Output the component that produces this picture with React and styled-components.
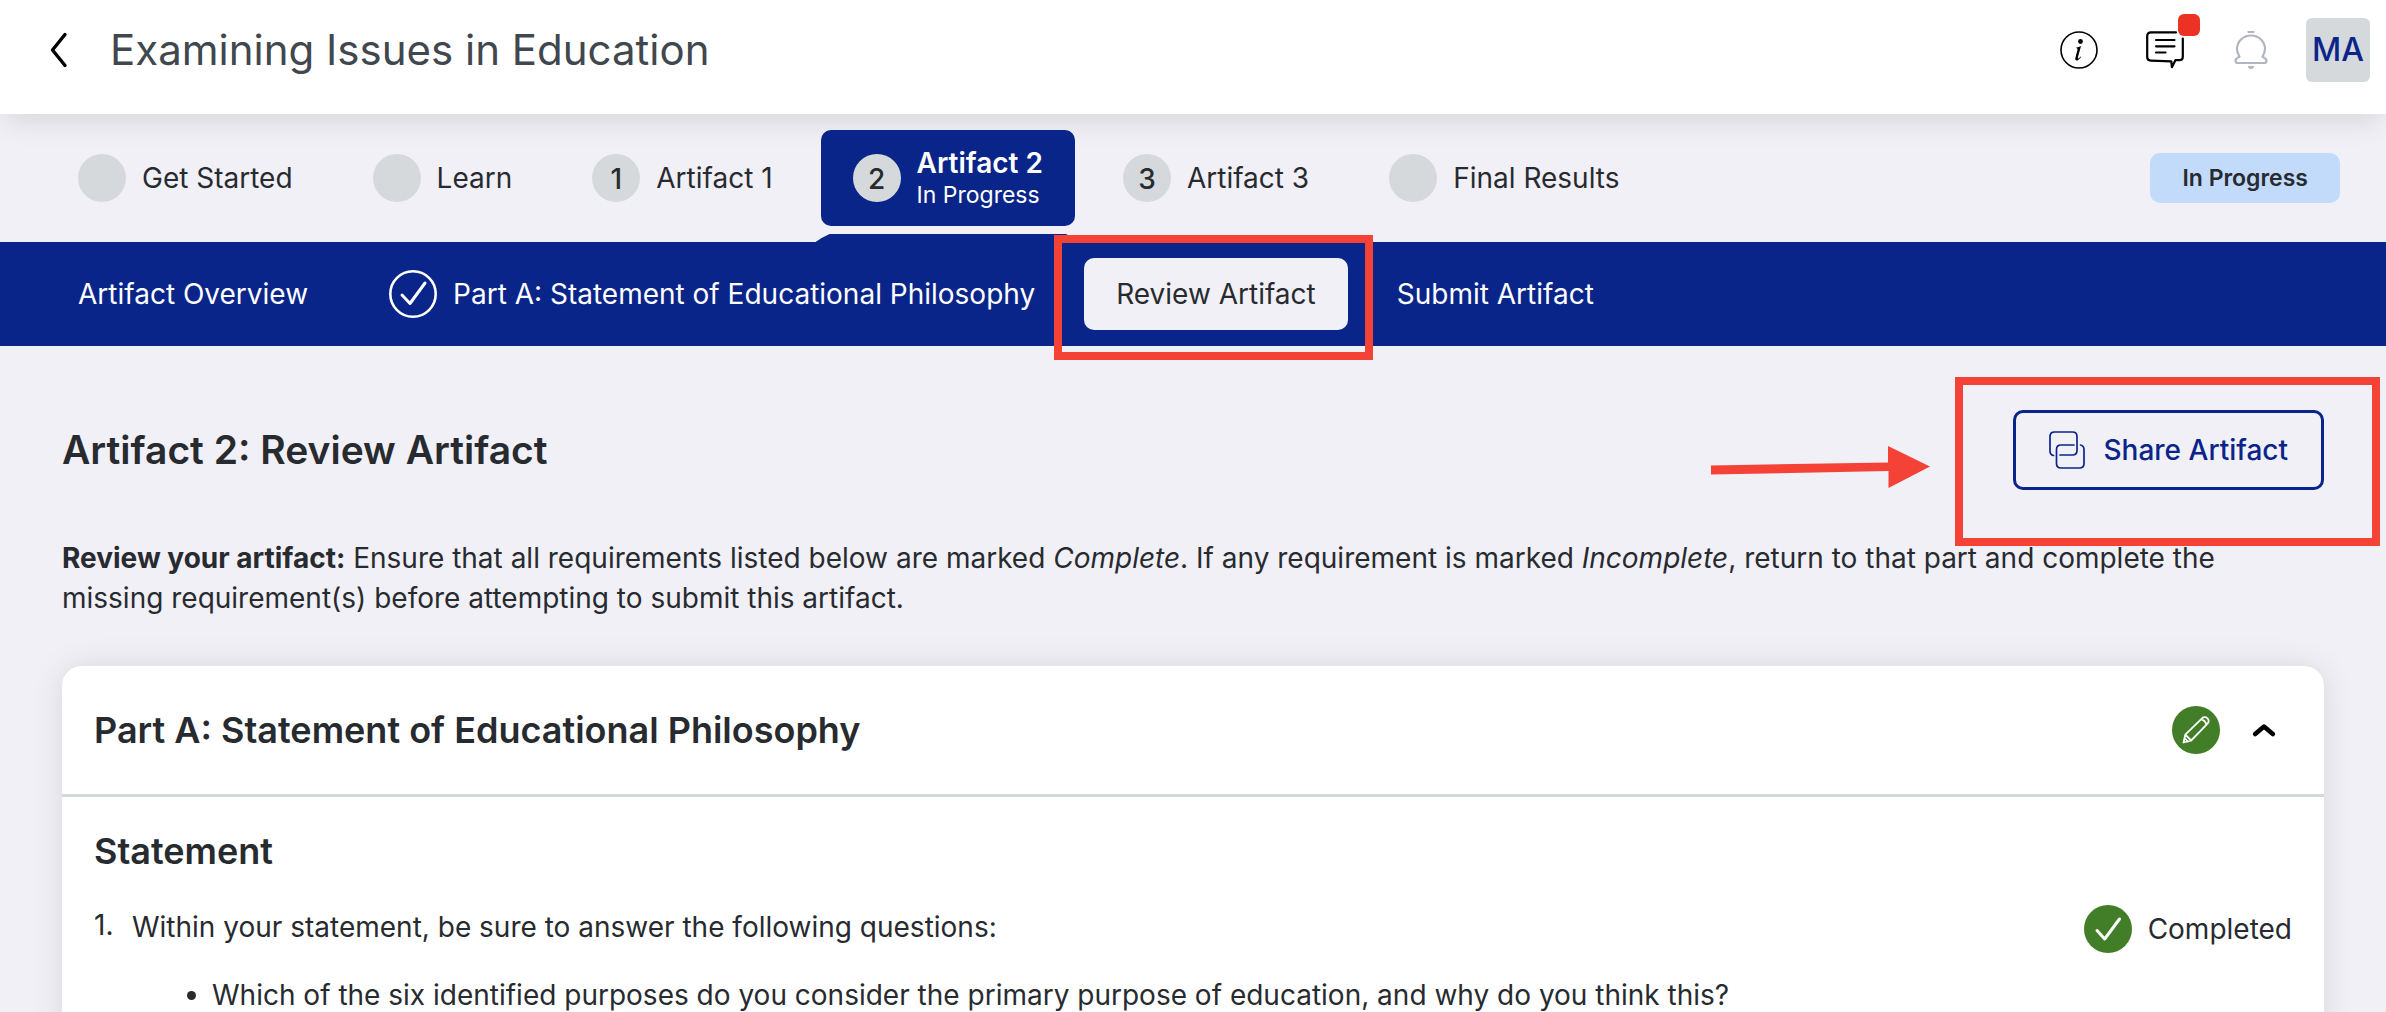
import React from 'react'
import styled, { createGlobalStyle, css } from 'styled-components'

const navy = '#0a2589'
const ink = '#272b30'
const grey = '#d5d9dc'
const page = '#f1f0f6'
const green = '#427d28'
const red = '#f44336'

const GlobalStyle = createGlobalStyle`
	* {
		box-sizing: border-box;
	}
	body {
		margin: 0;
		background: ${page};
		color: ${ink};
		font-family: Inter, 'Liberation Sans', sans-serif;
		font-size: 28px;
		line-height: 40px;
	}
	a {
		color: inherit;
		text-decoration: none;
	}
	h1, h2, h3, h4, p, ul, ol {
		margin: 0;
		padding: 0;
	}
	svg {
		display: block;
		fill: none;
		stroke: currentColor;
		stroke-linecap: round;
		stroke-linejoin: round;
	}
`
const Page = styled.div`
	height: 100vh;
	overflow: hidden;
`
const BaseButton = styled.button`
	padding: 0;
	border: 0;
	background: none;
	color: #000;
	font: inherit;
	cursor: pointer;
`
const Header = styled.header`
	position: relative;
	display: flex;
	align-items: flex-start;
	justify-content: space-between;
	height: 114px;
	padding: 18px 16px 0 48px;
	background: #fff;
	box-shadow: 0 12px 28px -6px rgba(0, 0, 0, 0.12);
`
const HeaderGroup = styled.div`
	display: flex;
	align-items: center;
	height: 64px;
	gap: ${({ $gap }) => $gap}px;
`
const CourseTitle = styled.h1`
	color: #41474e;
	font-size: 42px;
	font-weight: 400;
	line-height: 64px;
`
const IconButton = styled(BaseButton)`
	position: relative;
	color: ${({ $color }) => $color || '#000'};
`
const Badge = styled.span`
	position: absolute;
	top: -17px;
	right: -16px;
	width: 22px;
	height: 22px;
	border-radius: 6px;
	background: #ec3323;
`
const Avatar = styled(BaseButton)`
	width: 64px;
	height: 64px;
	border-radius: 6px;
	background: ${grey};
	color: ${navy};
	font-size: 32px;
	font-weight: 500;
`
const Steps = styled.nav`
	display: flex;
	align-items: center;
	justify-content: space-between;
	height: 128px;
	padding: 0 46px;
`
const StepList = styled.div`
	display: flex;
	gap: 16px;
`
const Step = styled.a`
	position: relative;
	display: flex;
	align-items: center;
	gap: 16px;
	height: 96px;
	padding: 0 32px;
	border-radius: 10px;
	${({ $active }) =>
		$active &&
		css`
			background: ${navy};
			color: #fff;
			&::after {
				content: '';
				position: absolute;
				top: 104px;
				left: -5px;
				right: -5px;
				height: 8px;
				background: ${navy};
				clip-path: polygon(0 100%, 6px 50%, 14px 0, calc(100% - 14px) 0, calc(100% - 6px) 50%, 100% 100%);
			}
		`}
`
const StepNumber = styled.span`
	width: 48px;
	height: 48px;
	border-radius: 50%;
	background: ${grey};
	color: ${ink};
	font-weight: 500;
	line-height: 50px;
	text-align: center;
`
const StepLabel = styled.span`
	display: flex;
	flex-direction: column;
	line-height: 32px;
	padding-top: 2px;
	strong {
		font-weight: 600;
	}
	small {
		font-size: 23px;
	}
`
const Status = styled.span`
	padding: 0 32px;
	border-radius: 10px;
	background: #c3dbfb;
	font-size: 23px;
	font-weight: 600;
	line-height: 50px;
`
const SubNav = styled.nav`
	display: flex;
	align-items: center;
	gap: 17px;
	height: 104px;
	padding: 0 46px;
	background: ${navy};
	color: #fff;
`
const SubLink = styled.a`
	position: relative;
	display: flex;
	align-items: center;
	gap: 16px;
	height: 72px;
	padding: 0 32px;
	border-radius: 10px;
	${({ $active }) =>
		$active &&
		css`
			background: ${page};
			color: ${ink};
		`}
`
const Highlight = styled.span`
	position: absolute;
	inset: ${({ $inset }) => $inset};
	border: 8px solid ${red};
	pointer-events: none;
`
const Main = styled.main`
	padding: 64px 62px 0;
`
const TitleRow = styled.div`
	display: flex;
	align-items: center;
	justify-content: space-between;
	height: 80px;
`
const PageTitle = styled.h2`
	font-size: 39px;
	font-weight: 600;
	line-height: 48px;
`
const ShareButton = styled(BaseButton)`
	position: relative;
	display: flex;
	align-items: center;
	gap: 18px;
	height: 80px;
	padding: 0 33px;
	border: 3px solid ${navy};
	border-radius: 10px;
	color: ${navy};
	font-weight: 500;
`
const Arrow = styled.svg`
	position: absolute;
	right: calc(100% + 85px);
	top: 32px;
	stroke: none;
	fill: ${red};
`
const Intro = styled.p`
	padding: 48px 32px 48px 0;
	strong {
		font-weight: 700;
	}
`
const Card = styled.section`
	border-radius: 20px;
	background: #fff;
	box-shadow: 0 0 32px rgba(0, 0, 0, 0.1);
`
const CardHeader = styled.div`
	display: flex;
	align-items: center;
	justify-content: space-between;
	height: 131px;
	padding: 0 32px;
	border-bottom: 3px solid ${grey};
`
const CardTitle = styled.h3`
	font-size: 36px;
	font-weight: 600;
	line-height: 48px;
`
const CardActions = styled.div`
	display: flex;
	align-items: center;
	gap: 16px;
`
const Round = styled.span`
	display: flex;
	align-items: center;
	justify-content: center;
	width: 48px;
	height: 48px;
	border-radius: 50%;
	background: ${green};
	color: #fff;
`
const CollapseButton = styled(BaseButton)`
	display: flex;
	align-items: center;
	justify-content: center;
	width: 56px;
	height: 48px;
`
const CardBody = styled.div`
	padding: 30px 32px 64px;
`
const Questions = styled.ol`
	margin-top: 30px;
	list-style: none;
`
const Question = styled.li`
	display: flex;
	justify-content: space-between;
	align-items: flex-start;
`
const QuestionText = styled.div`
	display: grid;
	grid-template-columns: 38px auto;
	line-height: 44px;
`
const Marker = styled.span`
	line-height: 40px;
`
const Bullets = styled.ul`
	margin-top: 24px;
	padding-left: 80px;
	list-style: disc;
`
const Done = styled.div`
	display: flex;
	align-items: center;
	gap: 16px;
`

const steps = [
	{ label: 'Get Started' },
	{ label: 'Learn' },
	{ label: 'Artifact 1', number: 1 },
	{ label: 'Artifact 2', number: 2, status: 'In Progress' },
	{ label: 'Artifact 3', number: 3 },
	{ label: 'Final Results' },
]

const BackIcon = () => (
	<svg width='20' height='36' viewBox='0 0 20 36' strokeWidth='3.4' strokeLinecap='butt'>
		<path d='M17 2.500 4.500 18 17 33.500' />
	</svg>
)
const InfoIcon = () => (
	<svg width='38' height='38' viewBox='0 0 38 38' strokeWidth='1.6'>
		<circle cx='19' cy='19' r='18' />
		<circle cx='20.5' cy='10.5' r='2.4' fill='currentColor' stroke='none' />
		<path d='M16.4 16.4c1.6-.3 3-.8 4.6-1.5l-3.1 11.6c-.3 1.3.4 1.4 2.7-1.1l.5.5c-3.4 4.7-6.6 4.6-5.7.9l2-7.9c.3-1.3-.1-1.6-1.2-1.7z' fill='currentColor' stroke='none' />
	</svg>
)
const ChatIcon = () => (
	<svg width='38' height='38' viewBox='0 0 38 38' strokeWidth='2.2'>
		<path d='M30 1.4H5C2.5 1.4 1.2 2.6 1.2 5v21c0 2.3 1.2 3.5 3.5 3.6l20.6.8.6 5.8 3.5-7h3.7c2.4 0 3.7-1.1 3.7-3.5V7.5' />
		<path d='M10 9h18.500M10 15.300h18.500M10 21.500h9.500' />
	</svg>
)
const BellIcon = () => (
	<svg width='38' height='38' viewBox='-2 0 38 38' strokeWidth='2.2'>
		<path d='M14.500 1h5M17 4.500c-8 0-14 6-14 13.500 0 3 1 5.300 2.500 7.500-2 1.500-4 2.300-4 4.200 0 1.500 1 2.300 2.500 2.300h26c1.500 0 2.500-.8 2.500-2.300 0-1.900-2-2.700-4-4.200C30 23.300 31 21 31 18c0-7.500-6-13.500-14-13.500z' />
		<path d='M14 35h6a3 3 0 0 1-6 0z' fill='currentColor' stroke='none' />
	</svg>
)
const CheckCircleIcon = () => (
	<svg width='48' height='48' viewBox='0 0 48 48'>
		<circle cx='24' cy='24' r='22.700' strokeWidth='2.600' />
		<path d='m13 25 8 8.500L36 13' strokeWidth='3' />
	</svg>
)
const CheckIcon = () => (
	<svg width='28' height='26' viewBox='0 0 28 26' strokeWidth='3'>
		<path d='m3 14.500 7.700 8.500L25.500 3' />
	</svg>
)
const PencilIcon = () => (
	<svg width='28' height='28' viewBox='0 0 28 28' strokeWidth='1.800'>
		<path d='m1.500 26.500 1.800-7.900L20 2.300c1.600-1.600 4-1.500 5.500 0s1.600 3.800 0 5.400L9.200 24.500zM3.300 18.600l5.900 5.900M19 3.300c2.800.5 4.500 2.200 5.300 5M2.500 22l3.300 3.500' />
	</svg>
)
const CaretIcon = () => (
	<svg width='24' height='14' viewBox='0 0 24 14' strokeWidth='4.500'>
		<path d='m3.200 11 8.800-7.500 8.800 7.500' />
	</svg>
)
const CopyIcon = () => (
	<svg width='36' height='38' viewBox='0 0 36 38' strokeWidth='1.700'>
		<path d='M4.500 24.500C2 24 1 22.500 1 20V5.500C1 2.500 2.500 1 5.500 1h18C26.500 1 28 2.500 28 5.500v14c0 3-1.500 4.500-4.500 4.500H11M25 14H12c-3 0-4.500 1.500-4.500 4.500v14c0 3 1.500 4.500 4.500 4.500h18.500c3 0 4.500-1.500 4.500-4.500v-14c0-2.500-1-4-3.500-4.500' />
	</svg>
)

const App = () => (
	<>
		<GlobalStyle />
		<Page>
			<Header>
				<HeaderGroup $gap={42}>
					<IconButton aria-label='Back'>
						<BackIcon />
					</IconButton>
					<CourseTitle>Examining Issues in Education</CourseTitle>
				</HeaderGroup>
				<HeaderGroup $gap={36}>
					<HeaderGroup $gap={48}>
						<IconButton aria-label='Information'>
							<InfoIcon />
						</IconButton>
						<IconButton aria-label='Messages'>
							<ChatIcon />
							<Badge />
						</IconButton>
						<IconButton aria-label='Notifications' $color='#b0b5bf'>
							<BellIcon />
						</IconButton>
					</HeaderGroup>
					<Avatar>MA</Avatar>
				</HeaderGroup>
			</Header>
			<Steps>
				<StepList>
					{steps.map(({ label, number, status }) => (
						<Step key={label} href='#' $active={!!status}>
							<StepNumber>{number}</StepNumber>
							{status ? (
								<StepLabel>
									<strong>{label}</strong>
									<small>{status}</small>
								</StepLabel>
							) : (
								label
							)}
						</Step>
					))}
				</StepList>
				<Status>In Progress</Status>
			</Steps>
			<SubNav>
				<SubLink href='#'>Artifact Overview</SubLink>
				<SubLink href='#'>
					<CheckCircleIcon />
					Part A: Statement of Educational Philosophy
				</SubLink>
				<SubLink href='#' $active>
					Review Artifact
					<Highlight $inset='-23px -25px -30px -30px' />
				</SubLink>
				<SubLink href='#'>Submit Artifact</SubLink>
			</SubNav>
			<Main>
				<TitleRow>
					<PageTitle>Artifact 2: Review Artifact</PageTitle>
					<ShareButton>
						<CopyIcon />
						Share Artifact
						<Highlight $inset='-36px -59px -59px -61px' />
						<Arrow width='220' height='44' viewBox='0 0 220 44'>
							<path d='M0 20.500 177 17.500V1L219 21.500 177.500 43V26L0 29.500z' />
						</Arrow>
					</ShareButton>
				</TitleRow>
				<Intro>
					<strong>Review your artifact:</strong> Ensure that all requirements listed below are marked{' '}
					<em>Complete</em>. If any requirement is marked <em>Incomplete</em>, return to that part and
					complete the missing requirement(s) before attempting to submit this artifact.
				</Intro>
				<Card>
					<CardHeader>
						<CardTitle>Part A: Statement of Educational Philosophy</CardTitle>
						<CardActions>
							<IconButton aria-label='Edit'>
								<Round>
									<PencilIcon />
								</Round>
							</IconButton>
							<CollapseButton aria-label='Collapse'>
								<CaretIcon />
							</CollapseButton>
						</CardActions>
					</CardHeader>
					<CardBody>
						<CardTitle as='h4'>Statement</CardTitle>
						<Questions>
							<Question>
								<QuestionText>
									<Marker>1.</Marker>
									<div>
										Within your statement, be sure to answer the following questions:
										<Bullets>
											<li>
												Which of the six identified purposes do you consider the primary purpose of
												education, and why do you think this?
											</li>
										</Bullets>
									</div>
								</QuestionText>
								<Done>
									<Round>
										<CheckIcon />
									</Round>
									Completed
								</Done>
							</Question>
						</Questions>
					</CardBody>
				</Card>
			</Main>
		</Page>
	</>
)

export default App
